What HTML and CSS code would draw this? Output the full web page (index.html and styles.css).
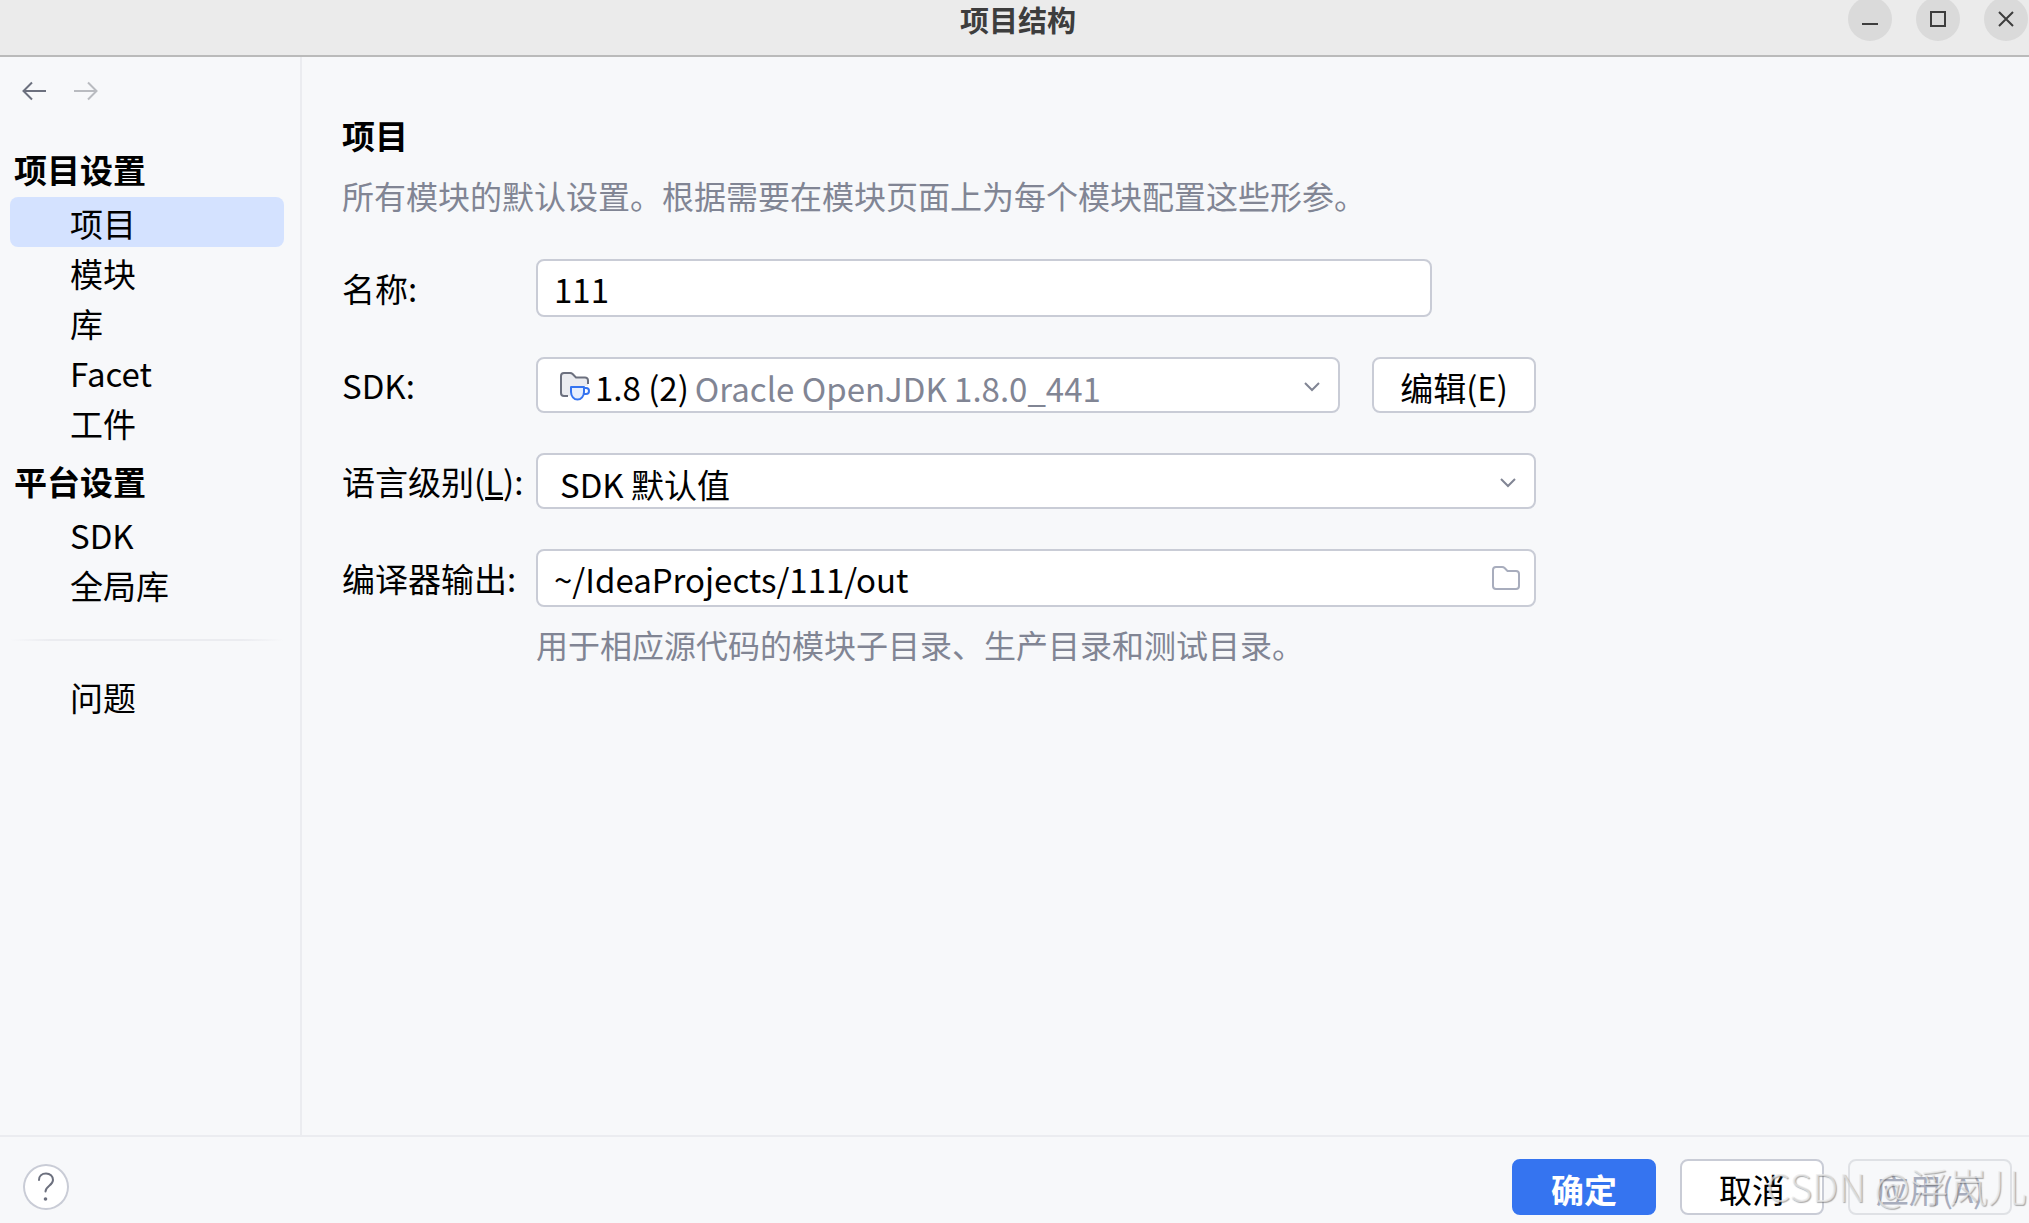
FILE: index.html
```html
<!DOCTYPE html>
<html lang="zh-CN">
<head>
  <meta charset="UTF-8" />
  <meta name="viewport" content="width=device-width, initial-scale=1.0"/>
  <title>项目结构</title>
  <link rel="stylesheet" href="styles.css">
</head>
<body>
  <header class="titlebar">
    <h1>项目结构</h1>
    <div class="window-controls">
      <button type="button" aria-label="最小化">
        <svg width="44" height="44" viewBox="0 0 44 44"><path d="M14 27h16"/></svg>
      </button>
      <button type="button" aria-label="最大化">
        <svg width="44" height="44" viewBox="0 0 44 44"><path d="M15 15h14v14H15z"/></svg>
      </button>
      <button type="button" aria-label="关闭">
        <svg width="44" height="44" viewBox="0 0 44 44"><path d="M15 15l14 14M29 15L15 29"/></svg>
      </button>
    </div>
  </header>

  <div class="container">
    <aside class="sidebar">
      <div class="history">
        <button type="button" aria-label="后退">
          <svg width="24" height="24" viewBox="0 0 24 24"><path d="M24 12H1.500M10 3.500L1.500 12l8.500 8.500"/></svg>
        </button>
        <button type="button" aria-label="前进" disabled>
          <svg width="24" height="24" viewBox="0 0 24 24"><path d="M0 12h22.500M14 3.500l8.500 8.500-8.500 8.500"/></svg>
        </button>
      </div>
      <nav>
        <h2>项目设置</h2>
        <a href="#project" class="active">项目</a>
        <a href="#modules">模块</a>
        <a href="#libraries">库</a>
        <a href="#facets">Facet</a>
        <a href="#artifacts">工件</a>
        <h2>平台设置</h2>
        <a href="#sdks">SDK</a>
        <a href="#global">全局库</a>
        <hr>
        <a href="#problems">问题</a>
      </nav>
    </aside>

    <main class="content">
      <h2>项目</h2>
      <p class="description">所有模块的默认设置。根据需要在模块页面上为每个模块配置这些形参。</p>

      <form class="settings" id="settings">
        <label for="name">名称:</label>
        <input type="text" id="name" class="name" value="111" />

        <label for="sdk">SDK:</label>
        <div class="row">
          <div class="field combo">
            <svg class="sdk-icon" width="32" height="30" viewBox="0 0 32 30">
              <path d="M10 24H4a3 3 0 0 1-3-3V4a3 3 0 0 1 3-3h7l5 5h9a3 3 0 0 1 3 3v5H10z" fill="#ebecf0"/>
              <path d="M8 24H4a3 3 0 0 1-3-3V4a3 3 0 0 1 3-3h6c1 0 2 .4 2.600 1L16 5.400h9a3 3 0 0 1 3 3V12" fill="none" stroke="#6c707e" stroke-width="2"/>
              <path d="M11 15h13v5a6.500 7.500 0 0 1-13 0z" fill="#e7effd" stroke="#3574f0" stroke-width="2" stroke-linejoin="round"/>
              <path d="M24 16h2a3 3 0 0 1 0 6h-2" fill="none" stroke="#3574f0" stroke-width="2"/>
            </svg>
            <span class="sdk-name">1.8 (2)</span>
            <select id="sdk">
              <option>Oracle OpenJDK 1.8.0_441</option>
            </select>
            <svg class="chevron" width="16" height="10" viewBox="0 0 16 10"><path d="M1 1l7 7 7-7"/></svg>
          </div>
          <button type="button" class="btn edit">编辑(E)</button>
        </div>

        <label for="level">语言级别(<u>L</u>):</label>
        <div class="field combo">
          <select id="level">
            <option>SDK 默认值</option>
          </select>
          <svg class="chevron" width="16" height="10" viewBox="0 0 16 10"><path d="M1 1l7 7 7-7"/></svg>
        </div>

        <label for="output">编译器输出:</label>
        <div class="field path">
          <input type="text" id="output" value="~/IdeaProjects/111/out" />
          <button type="button" class="browse" aria-label="浏览">
            <svg width="28" height="24" viewBox="0 0 28 24"><path d="M1 4a3 3 0 0 1 3-3h6c1 0 2 .4 2.600 1L15.500 5H24a3 3 0 0 1 3 3v12a3 3 0 0 1-3 3H4a3 3 0 0 1-3-3z"/></svg>
          </button>
        </div>
        <p class="hint">用于相应源代码的模块子目录、生产目录和测试目录。</p>
      </form>
    </main>
  </div>

  <footer class="footer">
    <button type="button" class="help" aria-label="帮助">
      <svg width="46" height="46" viewBox="0 0 46 46">
        <path d="M16 16c0-4 3-6.500 7-6.500s7 2.700 7 6.500c0 5.500-7.500 6-7.500 11.500"/>
        <circle cx="22.500" cy="35" r="1.800"/>
      </svg>
    </button>
    <button type="submit" form="settings" class="btn primary">确定</button>
    <button type="button" class="btn">取消</button>
    <button type="button" class="btn apply" disabled>应用(A)</button>
    <span class="watermark">CSDN @浮岚儿</span>
  </footer>
</body>
</html>
```
FILE: styles.css
```css
* {
  box-sizing: border-box;
}

body {
  display: flex;
  flex-direction: column;
  min-height: 100vh;
  margin: 0;
  background: #f7f8fa;
  color: #000;
  font-family: "Noto Sans CJK SC", sans-serif;
  font-size: 33px;
  line-height: 50px;
}

h1, h2, p {
  margin: 0;
}

button, input, select {
  font: inherit;
  color: inherit;
  margin: 0;
}

svg {
  display: block;
}

.titlebar {
  display: grid;
  grid-template-columns: 1fr auto 1fr;
  align-items: center;
  height: 57px;
  padding: 0 1px 17px 8px;
  background: #ebebeb;
  border-bottom: 2px solid #bababa;
}

.titlebar h1 {
  grid-column: 2;
  color: #3d3d3d;
  font-size: 29px;
  line-height: 38px;
}

.window-controls {
  display: flex;
  justify-content: flex-end;
  align-items: center;
  gap: 24px;
  height: 38px;
}

.window-controls button {
  padding: 0;
  border: none;
  border-radius: 50%;
  background: #dadada;
}

.window-controls path {
  fill: none;
  stroke: #3d3d3d;
  stroke-width: 2;
}

.container {
  display: flex;
  flex: 1;
}

.sidebar {
  width: 302px;
  border-right: 2px solid #ebecf0;
}

.history {
  display: flex;
  gap: 28px;
  padding: 22px 22px 32px;
}

.history button {
  padding: 0;
  border: none;
  background: none;
  color: #6c707e;
}

.history button:disabled {
  color: #b9bbc0;
}

.history path {
  fill: none;
  stroke: currentColor;
  stroke-width: 2;
}

.sidebar nav {
  padding: 0 16px 0 10px;
}

.sidebar h2 {
  padding: 9px 4px 3px;
  font-size: 33px;
}

.sidebar a {
  display: block;
  height: 50px;
  padding: 2px 0 0 60px;
  border-radius: 8px;
  color: #000;
  line-height: 48px;
  text-decoration: none;
}

.sidebar a.active {
  background: #d4e2ff;
}

.sidebar hr {
  height: 2px;
  margin: 30px 0;
  border: none;
  background: linear-gradient(to right, transparent, #ebecf0 15%, #ebecf0 85%, transparent);
}

.content {
  flex: 1;
  padding: 53px 40px;
}

.content h2 {
  font-size: 33px;
}

.description {
  padding: 10px 0 39px;
}

.description, .hint {
  color: #818594;
  font-size: 32px;
}

.settings {
  display: grid;
  grid-template-columns: 194px minmax(0, 1000px);
  row-gap: 40px;
  align-items: center;
}

.row {
  display: flex;
  gap: 32px;
}

.row .combo {
  flex: 1;
}

.name, .field {
  border: 2px solid #c9ccd6;
  border-radius: 8px;
  background: #fff;
}

.name {
  width: 896px;
  max-width: 100%;
  height: 58px;
  padding: 2px 16px 0;
}

.field {
  display: flex;
  align-items: center;
}

.combo {
  height: 56px;
  padding: 0 18px 0 22px;
}

.combo select {
  flex: 1;
  min-width: 0;
  height: 52px;
  padding: 4px 0 0;
  border: none;
  background: none;
  appearance: none;
}

.sdk-icon, .chevron {
  margin-top: 4px;
}

.sdk-name {
  padding: 4px 6px 0 3px;
}

.sdk-name + select {
  color: #818594;
}

.chevron path {
  fill: none;
  stroke: #818594;
  stroke-width: 2;
}

.path {
  height: 58px;
  padding: 0 14px 0 16px;
}

.path input {
  flex: 1;
  min-width: 0;
  padding: 2px 0 0;
  border: none;
  background: none;
}

.browse {
  padding: 0;
  border: none;
  background: none;
}

.browse path {
  fill: none;
  stroke: #a8adbd;
  stroke-width: 2;
}

.hint {
  grid-column: 2;
  margin-top: -28px;
}

.btn {
  width: 144px;
  height: 56px;
  padding: 4px 0 0;
  border: 2px solid #c9ccd6;
  border-radius: 8px;
  background: #fff;
  line-height: 48px;
}

.edit, .apply {
  width: 164px;
}

.primary {
  border-color: #3574f0;
  background: #3574f0;
  color: #fff;
  font-weight: bold;
}

.btn:disabled {
  border-color: #dfe1e5;
  background: none;
  color: #a8adbd;
}

.footer {
  position: relative;
  display: flex;
  align-items: center;
  gap: 24px;
  padding: 22px 17px 8px 23px;
  border-top: 2px solid #ebecf0;
}

.help {
  margin-right: auto;
  padding: 0;
  border: none;
  border-radius: 50%;
  background: #fff;
  box-shadow: inset 0 0 0 2px #c9ccd6;
}

.help path {
  fill: none;
  stroke: #6c707e;
  stroke-width: 2;
  stroke-linecap: round;
}

.help circle {
  fill: #6c707e;
}

/* the mark lies over the dialog buttons */
.watermark {
  position: absolute;
  right: 2px;
  bottom: 10px;
  color: rgba(235, 235, 235, 0.7);
  font-size: 39px;
  font-weight: 300;
  line-height: 56px;
  text-shadow: 1px 1px 1px rgba(90, 90, 90, 0.5);
  pointer-events: none;
}
```
